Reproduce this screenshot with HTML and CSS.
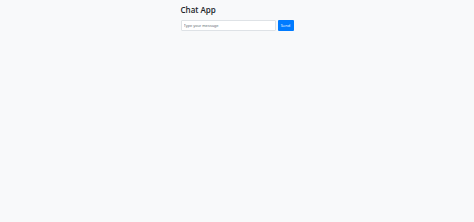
FILE: index.html
```html
<!DOCTYPE html>
<html lang="en">
<head>
    <meta charset="UTF-8">
    <meta name="viewport" content="width=device-width, initial-scale=1.0">
    <title>Chat App</title>
    <link rel="stylesheet" href="styles.css">
</head>
<body>
    <div class="container">
        <h1>Chat App</h1>
        <div id="messages"></div>
        <form class="input-group" onsubmit="return false;">
            <input type="text" id="message" placeholder="Type your message">
            <button type="submit">Send</button>
        </form>
    </div>
</body>
</html>
```

FILE: styles.css
```css
html, body {
    height: 100%;
}
body {
    font-family: "Open Sans", "Noto Sans", sans-serif;
    background-color: #f8f9fa;
    margin: 0;
    padding: 0;
}
.container {
    width: 113px;
    margin: 0 auto;
    padding-top: 4px;
}
h1 {
    font-size: 8px;
    font-weight: 600;
    color: #212529;
    margin: 0 0 4px 0;
    line-height: 12px;
}
.input-group {
    display: flex;
    gap: 2px;
}
input[type="text"] {
    flex: 1;
    height: 11px;
    box-sizing: border-box;
    border: 1px solid #dee2e6;
    border-radius: 1px;
    padding: 0 2px;
    font-size: 4px;
    background: #fff;
    outline: none;
}
input::placeholder {
    color: #6c757d;
}
button {
    width: 16px;
    height: 11px;
    padding: 0;
    border: none;
    border-radius: 1px;
    background-color: #007bff;
    color: white;
    font-size: 4px;
    font-family: inherit;
    cursor: pointer;
}
```
